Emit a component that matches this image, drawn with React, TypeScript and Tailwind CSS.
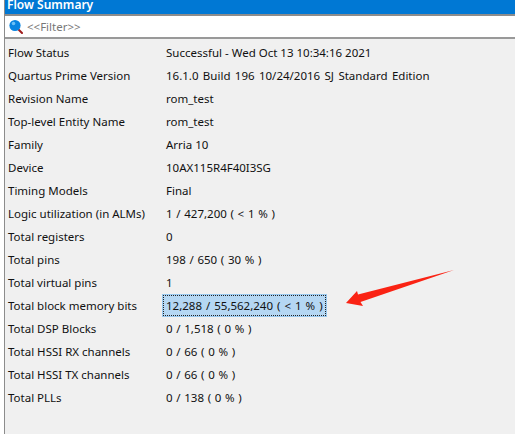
import React from 'react'

const rows: [string, string][] = [
  ['Flow Status', 'Successful - Wed Oct 13 10:34:16 2021'],
  ['Quartus Prime Version', '16.1.0 Build 196 10/24/2016 SJ Standard Edition'],
  ['Revision Name', 'rom_test'],
  ['Top-level Entity Name', 'rom_test'],
  ['Family', 'Arria 10'],
  ['Device', '10AX115R4F40I3SG'],
  ['Timing Models', 'Final'],
  ['Logic utilization (in ALMs)', '1 / 427,200 ( < 1 % )'],
  ['Total registers', '0'],
  ['Total pins', '198 / 650 ( 30 % )'],
  ['Total virtual pins', '1'],
  ['Total block memory bits', '12,288 / 55,562,240 ( < 1 % )'],
  ['Total DSP Blocks', '0 / 1,518 ( 0 % )'],
  ['Total HSSI RX channels', '0 / 66 ( 0 % )'],
  ['Total HSSI TX channels', '0 / 66 ( 0 % )'],
  ['Total PLLs', '0 / 138 ( 0 % )'],
]

export default function App() {
  return (
    <div className="relative h-[434px] w-[515px] overflow-hidden bg-white pl-1 font-['Noto_Sans',sans-serif] text-[11.5px] text-[#111]">
      <div className="flex h-[434px] flex-col border-l border-[#8c8c8c]">
        <div className="h-[14px] overflow-hidden bg-[#0078d4] pl-[2px] text-[12px] leading-[9px] font-semibold text-white">
          Flow Summary
        </div>
        <div className="flex h-[25px] items-center gap-[4px] border-y-2 border-t-[#8c8c8c] border-b-[#999] bg-white pl-[4px]">
          <svg width="14" height="15" viewBox="0 0 14 15">
            <path d="M9 10L13 14" stroke="#a01c1c" strokeWidth="2" strokeLinecap="round" />
            <circle cx="6" cy="6.5" r="5.6" fill="#0a84e0" />
            <circle cx="4.5" cy="4.5" r="1.8" fill="#6cc0f5" />
          </svg>
          <span className="text-[#777]">{'<<Filter>>'}</span>
        </div>
        <div className="flex-1 bg-[#f0f0f0] pt-[2px]">
          {rows.map(([label, value]) => (
            <div key={label} className="flex h-[23px] items-center pl-[3px]">
              <div className="w-[158px] whitespace-nowrap">{label}</div>
              {label === 'Total block memory bits' ? (
                <div className="-ml-[3px] whitespace-nowrap border border-dotted border-[#222] bg-[#b5d7f3] px-[2px] leading-[19px] outline outline-1 outline-[#99c9ef] [word-spacing:1px]">
                  {value}
                </div>
              ) : label === 'Quartus Prime Version' ? (
                <div className="whitespace-nowrap [word-spacing:1.4px]">{value}</div>
              ) : value.includes('/') ? (
                <div className="whitespace-nowrap [word-spacing:0.7px]">{value}</div>
              ) : (
                <div className="whitespace-nowrap">{value}</div>
              )}
            </div>
          ))}
        </div>
      </div>
      <svg className="absolute left-0 top-0" width="515" height="434" viewBox="0 0 515 434">
        <path d="M346 303L357 291L358 294.5L454 270L360.5 302L363 306Z" fill="#fa2314" />
      </svg>
    </div>
  )
}
